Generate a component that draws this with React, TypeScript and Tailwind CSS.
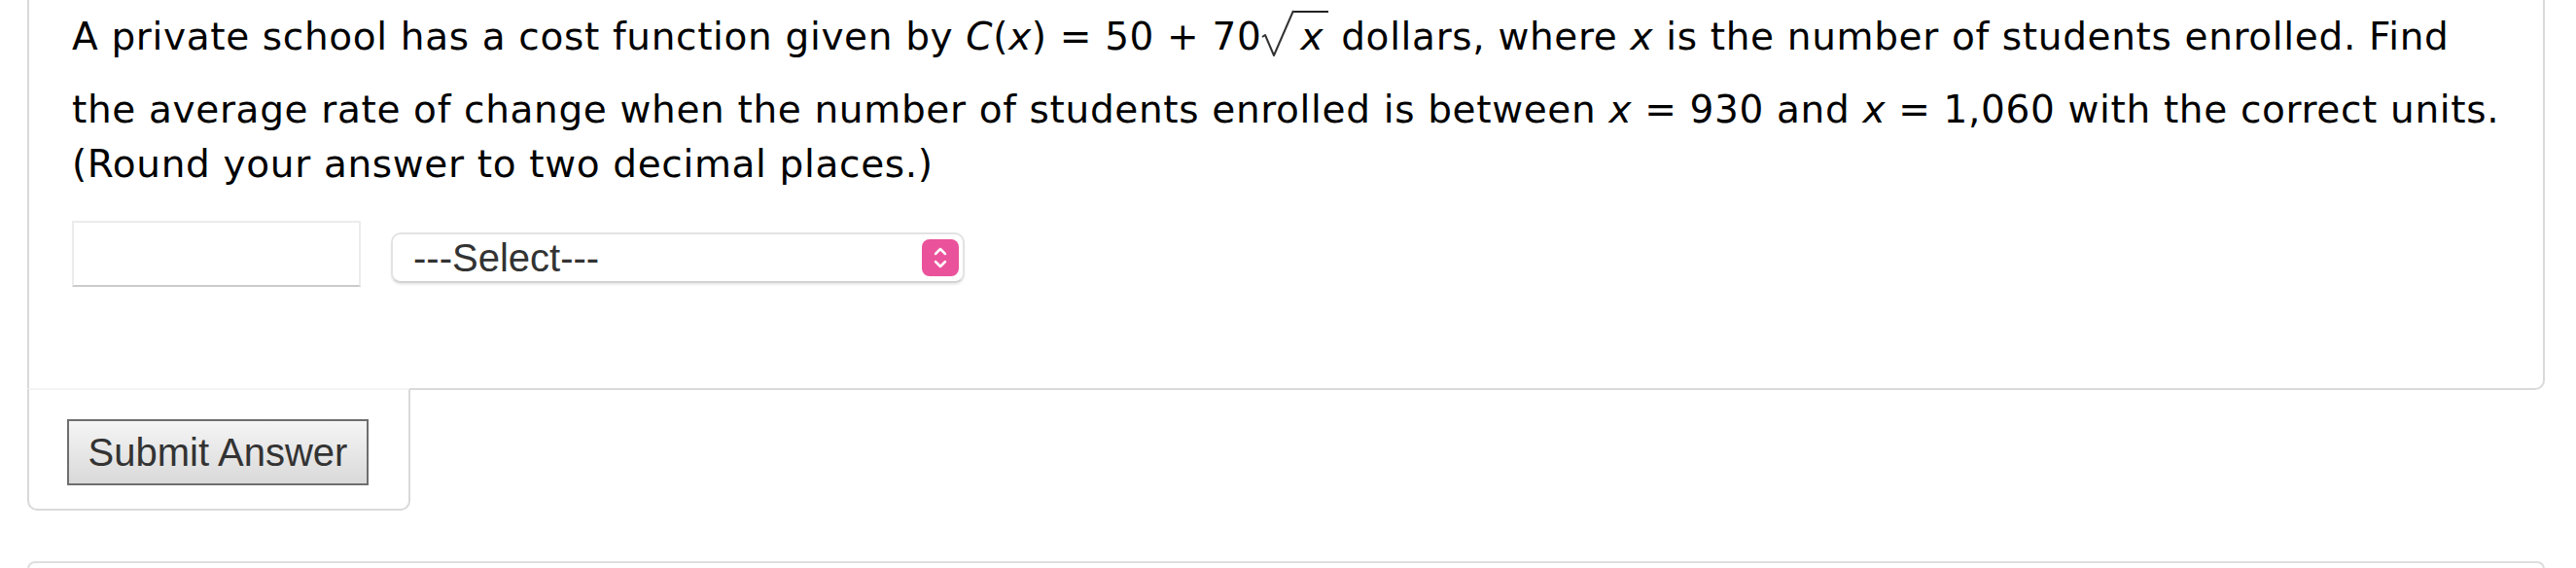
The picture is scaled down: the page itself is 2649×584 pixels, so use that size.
import { useState } from "react";

const Sqrt = function ({ children }: { children: React.ReactNode }) {
  return (
    <span className="relative inline-block pl-[32px] pb-[19px] align-baseline">
      <svg
        className="absolute left-0 top-0"
        width="34"
        height="48"
        viewBox="0 0 34 48"
        fill="none"
      >
        <polyline
          points="1,28 4,26 13,47 33,1"
          stroke="#333"
          strokeWidth="2"
          strokeLinejoin="round"
        />
      </svg>
      <span className="inline-block border-t-2 border-[#222] pt-[7px] pl-[8px] pr-[5px] leading-[36px]">
        {children}
      </span>
    </span>
  );
};

const Question = function () {
  return (
    <p className="font-['DejaVu_Sans',sans-serif] text-[39px] tracking-[0.65px] leading-[56px] text-black">
      A private school has a cost function given by <i>C</i>(<i>x</i>) = 50 +
      70
      <Sqrt>
        <i>x</i>
      </Sqrt>{" "}
      dollars, where <i>x</i> is the number of students enrolled. Find
      <br />
      the average rate of change when the number of students enrolled is
      between <i>x</i> = 930 and <i>x</i> = 1,060 with the correct units.
      <br />
      (Round your answer to two decimal places.)
    </p>
  );
};

const App = function () {
  const [answer, setAnswer] = useState("");
  const [unit, setUnit] = useState("");
  return (
    <div className="min-h-[584px] bg-white pl-[28px] pr-[32px] font-['Liberation_Sans',Arial,sans-serif]">
      <div className="border-x-2 border-b-2 border-[#d9d9d9] rounded-br-[10px] pt-[10px] pl-[44px] pr-[8px] pb-[104px]">
        <Question />
        <div className="mt-[30px] flex items-start gap-[31px]">
          <input
            type="text"
            value={answer}
            onChange={(e) => setAnswer(e.target.value)}
            className="w-[297px] h-[68px] border-2 border-[#ececec] border-b-[#cbcbcb] bg-white outline-none"
          />
          <div className="relative mt-[12px] w-[590px] h-[52px]">
            <select
              value={unit}
              onChange={(e) => setUnit(e.target.value)}
              className="w-full h-full appearance-none rounded-[10px] border-2 border-[#e3e3e3] border-b-[#d2d2d2] bg-white pl-[21px] text-[40px] leading-none text-[#333] shadow-[0_2px_2px_rgba(0,0,0,0.08)] outline-none"
            >
              <option value="">---Select---</option>
              <option value="dollars per student">dollars per student</option>
              <option value="students per dollar">students per dollar</option>
              <option value="dollars">dollars</option>
              <option value="students">students</option>
            </select>
            <span className="pointer-events-none absolute right-[6px] top-[7px] flex h-[38px] w-[38px] items-center justify-center rounded-[8px] bg-[#ea529b]">
              <svg width="16" height="26" viewBox="0 0 16 26" fill="none">
                <polyline
                  points="3,9 8,4 13,9"
                  stroke="white"
                  strokeWidth="2.5"
                  strokeLinecap="round"
                  strokeLinejoin="round"
                />
                <polyline
                  points="3,17 8,22 13,17"
                  stroke="white"
                  strokeWidth="2.5"
                  strokeLinecap="round"
                  strokeLinejoin="round"
                />
              </svg>
            </span>
          </div>
        </div>
      </div>
      <div className="-mt-[2px] w-[394px] border-x-2 border-b-2 border-t-2 border-[#d9d9d9] border-t-[#f4f4f4] rounded-b-[10px] bg-white pl-[39px] pt-[30px] pb-[24px]">
        <button className="w-[310px] h-[68px] border-2 border-[#6e6e6e] bg-gradient-to-b from-[#f5f5f5] to-[#d9d9d9] text-[40px] leading-none text-[#333]">
          Submit Answer
        </button>
      </div>
      <div className="mt-[52px] h-[20px] border-x-2 border-t-2 border-[#dedede] rounded-t-[8px]"></div>
    </div>
  );
};

export default App;
